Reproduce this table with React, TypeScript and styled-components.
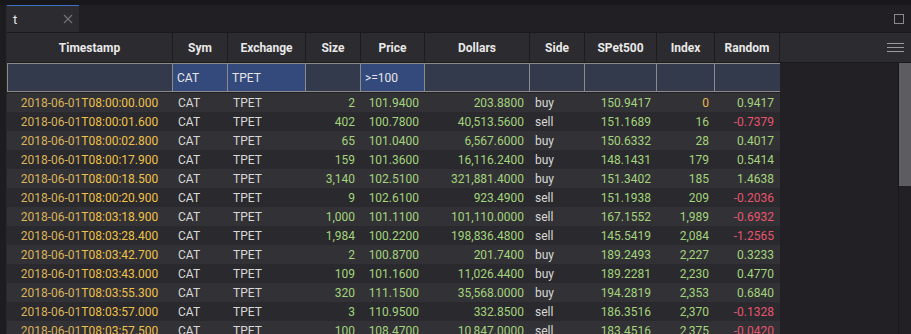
import React from "react";
import styled, { createGlobalStyle } from "styled-components";

const Global = createGlobalStyle`
  html, body { margin: 0; padding: 0; background: #1b1a1d; overflow: hidden; }
  * { box-sizing: border-box; }
`;

type Align = "left" | "right" | "center";
interface Col { key: string; title: string; width: number; align: Align; filter?: string }

const cols: Col[] = [
  { key: "ts", title: "Timestamp", width: 166, align: "center" },
  { key: "sym", title: "Sym", width: 55, align: "left", filter: "CAT" },
  { key: "ex", title: "Exchange", width: 78, align: "left", filter: "TPET" },
  { key: "size", title: "Size", width: 55, align: "right" },
  { key: "price", title: "Price", width: 64, align: "right", filter: ">=100" },
  { key: "dollars", title: "Dollars", width: 105, align: "right" },
  { key: "side", title: "Side", width: 55, align: "left" },
  { key: "spet", title: "SPet500", width: 72, align: "right" },
  { key: "index", title: "Index", width: 58, align: "right" },
  { key: "random", title: "Random", width: 65, align: "right" },
];

const rows: string[][] = [
  ["08:00:00.000", "2", "101.9400", "203.8800", "buy", "150.9417", "0", "0.9417"],
  ["08:00:01.600", "402", "100.7800", "40,513.5600", "sell", "151.1689", "16", "-0.7379"],
  ["08:00:02.800", "65", "101.0400", "6,567.6000", "buy", "150.6332", "28", "0.4017"],
  ["08:00:17.900", "159", "101.3600", "16,116.2400", "buy", "148.1431", "179", "0.5414"],
  ["08:00:18.500", "3,140", "102.5100", "321,881.4000", "buy", "151.3402", "185", "1.4638"],
  ["08:00:20.900", "9", "102.6100", "923.4900", "sell", "151.1938", "209", "-0.2036"],
  ["08:03:18.900", "1,000", "101.1100", "101,110.0000", "sell", "167.1552", "1,989", "-0.6932"],
  ["08:03:28.400", "1,984", "100.2200", "198,836.4800", "sell", "145.5419", "2,084", "-1.2565"],
  ["08:03:42.700", "2", "100.8700", "201.7400", "buy", "189.2493", "2,227", "0.3233"],
  ["08:03:43.000", "109", "101.1600", "11,026.4400", "buy", "189.2281", "2,230", "0.4770"],
  ["08:03:55.300", "320", "111.1500", "35,568.0000", "buy", "194.2819", "2,353", "0.6840"],
  ["08:03:57.000", "3", "110.9500", "332.8500", "sell", "186.3516", "2,370", "-0.1328"],
  ["08:03:57.500", "100", "108.4700", "10,847.0000", "sell", "183.4516", "2,375", "-0.0420"],
];

const Frame = styled.div`
  width: 911px;
  height: 334px;
  display: flex;
  flex-direction: column;
  font-family: Roboto, "Open Sans", sans-serif;
  font-size: 12px;
  color: #d6d6d6;
  overflow: hidden;
`;

const TopStrip = styled.div`
  height: 5px;
  flex: none;
  background: #18171a;
`;

const Body = styled.div`
  flex: 1;
  display: flex;
  min-height: 0;
`;

const Gutter = styled.div`
  width: 7px;
  flex: none;
  background: #1d1c1f;
  border-right: 1px solid #29282c;
`;

const Main = styled.div`
  flex: 1;
  display: flex;
  flex-direction: column;
  min-width: 0;
  background: #222024;
`;

const TabBar = styled.div`
  height: 28px;
  flex: none;
  display: flex;
  align-items: stretch;
  background: #211f23;
  border-bottom: 1px solid #19181b;
`;

const Tab = styled.div`
  width: 72px;
  display: flex;
  align-items: center;
  justify-content: space-between;
  padding: 0 6px 0 6px;
  background: #2c2b2f;
  border-top: 1px solid #3f73c8;
  color: #e6e6e6;
  font-size: 13px;
`;

const TabSpacer = styled.div`
  flex: 1;
  display: flex;
  align-items: center;
  justify-content: flex-end;
  padding-right: 7px;
`;

const MaxBox = styled.div`
  width: 10px;
  height: 10px;
  border: 1px solid #8a898d;
`;

const HeaderRow = styled.div`
  height: 30px;
  flex: none;
  display: flex;
  background: #2c2b2f;
  border-bottom: 1px solid #1a191c;
`;

const HeaderCell = styled.div<{ $w: number }>`
  width: ${(p) => p.$w}px;
  flex: none;
  display: flex;
  align-items: center;
  justify-content: center;
  font-weight: 700;
  color: #e8e8e8;
  border-right: 1px solid #1c1b1e;
`;

const HeaderFill = styled.div`
  flex: 1;
  display: flex;
  align-items: center;
  justify-content: flex-end;
  padding-right: 7px;
`;

const Content = styled.div`
  flex: 1;
  display: flex;
  min-height: 0;
`;

const Table = styled.div`
  width: 773px;
  flex: none;
  display: flex;
  flex-direction: column;
`;

const FilterRow = styled.div`
  height: 29px;
  flex: none;
  display: flex;
  border: 1px solid #8a8a8a;
  margin-bottom: 1px;
`;

const FilterCell = styled.div<{ $w: number; $active: boolean }>`
  width: ${(p) => p.$w}px;
  flex: none;
  display: flex;
  align-items: center;
  padding-left: 4px;
  background: ${(p) => (p.$active ? "#344a7c" : "#333a4c")};
  color: #e6e6e6;
  border-right: 1px solid #8a8a8a;
  &:last-child { border-right: none; }
`;

const Row = styled.div<{ $odd: boolean }>`
  height: 19px;
  flex: none;
  display: flex;
  background: ${(p) => (p.$odd ? "#323135" : "#2a292d")};
`;

const Cell = styled.div<{ $w: number; $align: Align; $color: string }>`
  width: ${(p) => p.$w}px;
  flex: none;
  display: flex;
  align-items: center;
  justify-content: ${(p) =>
    p.$align === "left" ? "flex-start" : p.$align === "right" ? "flex-end" : "center"};
  padding: 0 6px 0 5px;
  color: ${(p) => p.$color};
  white-space: nowrap;
`;

const DatePart = styled.span`
  color: #dab35a;
`;
const TimePart = styled.span`
  color: #efc14a;
`;

const Empty = styled.div`
  flex: 1;
`;

const ScrollTrack = styled.div`
  width: 13px;
  flex: none;
  border-left: 1px solid #19181b;
  background: #222024;
`;

const Thumb = styled.div`
  height: 123px;
  background: #5d5d5f;
`;

const GREEN = "#a3d47c";
const RED = "#e6556f";
const GOLD = "#e6b84e";
const GRAY = "#d8d8d8";

function Menu() {
  return (
    <svg width="17" height="10" viewBox="0 0 17 10">
      <g stroke="#9a999d" strokeWidth="1">
        <line x1="0" y1="0.5" x2="17" y2="0.5" />
        <line x1="0" y1="4.5" x2="17" y2="4.5" />
        <line x1="0" y1="8.5" x2="17" y2="8.5" />
      </g>
    </svg>
  );
}

function CloseX() {
  return (
    <svg width="10" height="10" viewBox="0 0 10 10">
      <g stroke="#706f73" strokeWidth="1.3">
        <line x1="1" y1="1" x2="9" y2="9" />
        <line x1="9" y1="1" x2="1" y2="9" />
      </g>
    </svg>
  );
}

export default function App() {
  return (
    <>
      <Global />
      <Frame>
        <TopStrip />
        <Body>
          <Gutter />
          <Main>
            <TabBar>
              <Tab>
                <span>t</span>
                <CloseX />
              </Tab>
              <TabSpacer>
                <MaxBox />
              </TabSpacer>
            </TabBar>
            <HeaderRow>
              {cols.map((c) => (
                <HeaderCell key={c.key} $w={c.width}>{c.title}</HeaderCell>
              ))}
              <HeaderFill>
                <Menu />
              </HeaderFill>
            </HeaderRow>
            <Content>
              <Table>
                <FilterRow>
                  {cols.map((c, i) => (
                    <FilterCell key={c.key} $w={i === 0 ? c.width - 1 : c.width} $active={!!c.filter}>
                      {c.filter ?? ""}
                    </FilterCell>
                  ))}
                </FilterRow>
                {rows.map((r, i) => {
                  const [time, size, price, dollars, side, spet, idx, rnd] = r;
                  return (
                    <Row key={i} $odd={i % 2 === 0}>
                      <Cell $w={cols[0].width} $align="center" $color={GOLD}>
                        <span>
                          <DatePart>2018-06-01</DatePart>
                          <TimePart>T{time}</TimePart>
                        </span>
                      </Cell>
                      <Cell $w={cols[1].width} $align="left" $color={GRAY}>CAT</Cell>
                      <Cell $w={cols[2].width} $align="left" $color={GRAY}>TPET</Cell>
                      <Cell $w={cols[3].width} $align="right" $color={GREEN}>{size}</Cell>
                      <Cell $w={cols[4].width} $align="right" $color={GREEN}>{price}</Cell>
                      <Cell $w={cols[5].width} $align="right" $color={GREEN}>{dollars}</Cell>
                      <Cell $w={cols[6].width} $align="left" $color={GRAY}>{side}</Cell>
                      <Cell $w={cols[7].width} $align="right" $color={GREEN}>{spet}</Cell>
                      <Cell $w={cols[8].width} $align="right" $color={idx === "0" ? GOLD : GREEN}>{idx}</Cell>
                      <Cell $w={cols[9].width} $align="right" $color={rnd.startsWith("-") ? RED : GREEN}>{rnd}</Cell>
                    </Row>
                  );
                })}
              </Table>
              <Empty />
              <ScrollTrack>
                <Thumb />
              </ScrollTrack>
            </Content>
          </Main>
        </Body>
      </Frame>
    </>
  );
}
